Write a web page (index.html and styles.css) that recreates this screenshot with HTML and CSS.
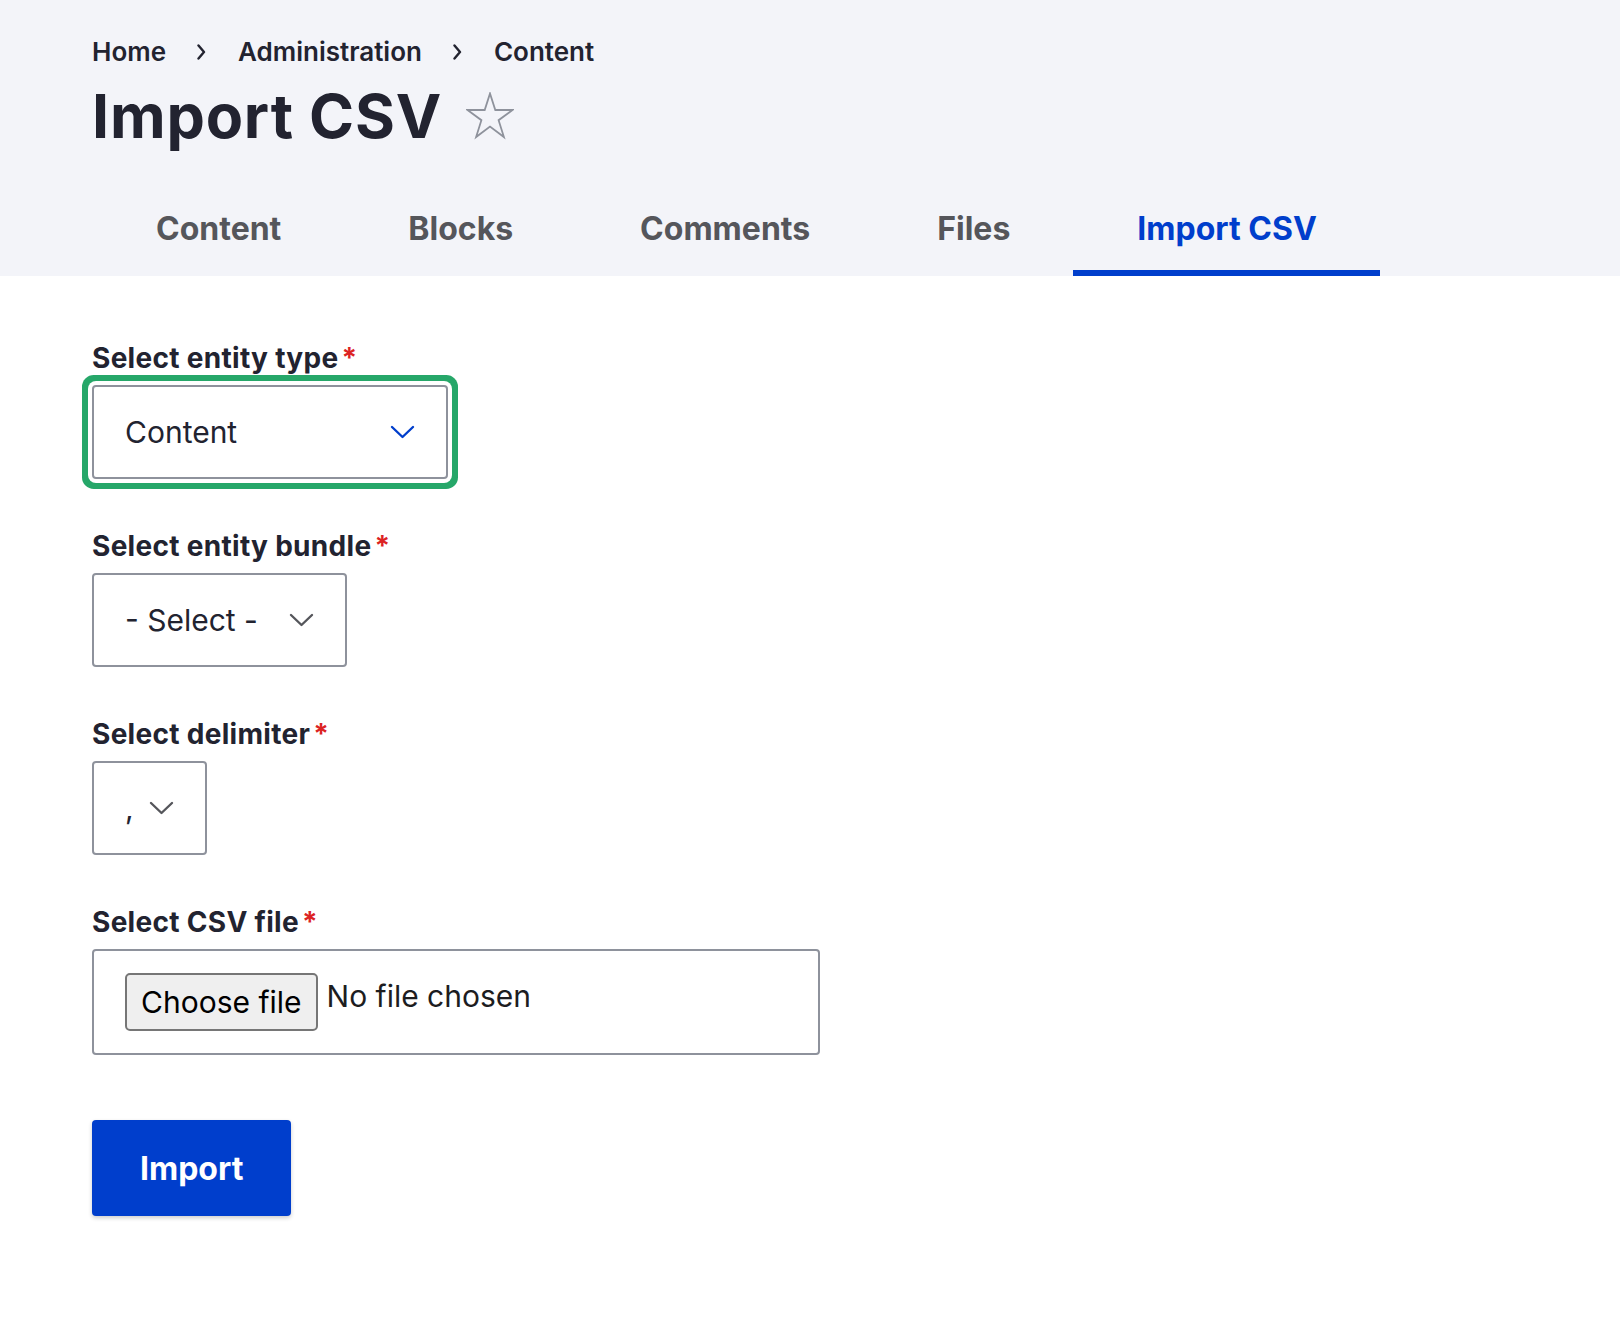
FILE: index.html
```html
<!DOCTYPE html>
<html lang="en">
<head>
    <meta charset="UTF-8">
    <meta name="viewport" content="width=device-width, initial-scale=1.0">
    <title>Import CSV</title>
    <link rel="stylesheet" href="styles.css">
</head>
<body>
    <header class="page-header">
        <nav class="breadcrumb" aria-label="Breadcrumb">
            <ol>
                <li><a href="#">Home</a></li>
                <li>
                    <svg class="breadcrumb-sep" width="10" height="16" viewBox="0 0 10 16"><path d="M2.5 1.5 L8 8 L2.5 14.5"/></svg>
                    <a href="#">Administration</a>
                </li>
                <li>
                    <svg class="breadcrumb-sep" width="10" height="16" viewBox="0 0 10 16"><path d="M2.5 1.5 L8 8 L2.5 14.5"/></svg>
                    <a href="#">Content</a>
                </li>
            </ol>
        </nav>
        <div class="title-row">
            <h1>Import CSV</h1>
            <button class="shortcut" type="button" aria-label="Add to shortcuts">
                <svg width="48" height="48" viewBox="0 0 48 48">
                    <polygon points="24,1.5 29.3,18 46.5,18 32.6,28.2 37.9,45 24,34.6 10.1,45 15.4,28.2 1.5,18 18.7,18"/>
                </svg>
            </button>
        </div>
        <nav class="tabs">
            <ul>
                <li><a href="#">Content</a></li>
                <li><a href="#">Blocks</a></li>
                <li><a href="#">Comments</a></li>
                <li><a href="#">Files</a></li>
                <li><a href="#" class="is-active">Import CSV</a></li>
            </ul>
        </nav>
    </header>

    <main class="page-content">
        <form class="import-form">
            <div class="form-item">
                <label for="entity-type">Select entity type<span class="required">*</span></label>
                <div class="select-wrap">
                    <select id="entity-type" class="form-select is-focused" style="width: 356px;">
                        <option>Content</option>
                    </select>
                    <svg class="select-arrow is-blue" width="25" height="14" viewBox="0 0 25 14"><path d="M2 2 L12.5 12 L23 2"/></svg>
                </div>
            </div>

            <div class="form-item">
                <label for="entity-bundle">Select entity bundle<span class="required">*</span></label>
                <div class="select-wrap">
                    <select id="entity-bundle" class="form-select" style="width: 255px;">
                        <option>- Select -</option>
                    </select>
                    <svg class="select-arrow" width="25" height="14" viewBox="0 0 25 14"><path d="M2 2 L12.5 12 L23 2"/></svg>
                </div>
            </div>

            <div class="form-item">
                <label for="delimiter">Select delimiter<span class="required">*</span></label>
                <div class="select-wrap">
                    <select id="delimiter" class="form-select" style="width: 115px;">
                        <option>,</option>
                    </select>
                    <svg class="select-arrow" width="25" height="14" viewBox="0 0 25 14"><path d="M2 2 L12.5 12 L23 2"/></svg>
                </div>
            </div>

            <div class="form-item">
                <label for="csv-file">Select CSV file<span class="required">*</span></label>
                <div class="file-widget">
                    <input type="file" id="csv-file" class="file-input">
                    <label for="csv-file" class="file-button">Choose file</label>
                    <span class="file-status">No file chosen</span>
                </div>
            </div>

            <div class="form-actions">
                <button type="submit" class="button-primary">Import</button>
            </div>
        </form>
    </main>
</body>
</html>
```

FILE: styles.css
```css
body {
    margin: 0;
    font-family: 'Inter', 'Noto Sans', sans-serif;
    color: #222330;
    background: #ffffff;
}

a {
    color: inherit;
    text-decoration: none;
}

/* header */

.page-header {
    background: #f3f4f9;
    padding: 36px 92px 0;
}

.breadcrumb ol {
    display: flex;
    align-items: center;
    margin: 0;
    padding: 0;
    list-style: none;
    font-size: 26px;
    line-height: 32px;
    font-weight: 600;
}

.breadcrumb li {
    display: flex;
    align-items: center;
}

.breadcrumb-sep {
    margin: 0 32px 0 30px;
}

.breadcrumb-sep path {
    fill: none;
    stroke: #222330;
    stroke-width: 2.4;
    stroke-linecap: round;
    stroke-linejoin: round;
}

.title-row {
    display: flex;
    align-items: center;
    margin-top: 12px;
}

.title-row h1 {
    margin: 0;
    font-size: 61px;
    line-height: 72px;
    font-weight: 700;
    letter-spacing: 0.8px;
}

.shortcut {
    margin-left: 24px;
    padding: 0;
    border: none;
    background: none;
    cursor: pointer;
    line-height: 0;
}

.shortcut polygon {
    fill: none;
    stroke: #8e929c;
    stroke-width: 1.8;
    stroke-linejoin: miter;
}

.tabs {
    margin-top: 29px;
}

.tabs ul {
    display: flex;
    margin: 0;
    padding: 0;
    list-style: none;
}

.tabs a {
    display: block;
    padding: 0 63px 0 64px;
    font-size: 32px;
    line-height: 95px;
    font-weight: 700;
    color: #55565b;
}

.tabs a.is-active {
    color: #003ecc;
    box-shadow: inset 0 -6px 0 #003ecc;
}

/* form */

.page-content {
    padding: 66px 92px 80px;
}

.form-item {
    margin-bottom: 51px;
}

.form-item > label {
    display: block;
    margin-bottom: 11px;
    font-size: 28px;
    line-height: 32px;
    font-weight: 700;
    letter-spacing: 0.3px;
}

.required {
    margin-left: 3px;
    color: #dc2323;
}

.select-wrap {
    position: relative;
    display: inline-block;
}

.form-select {
    display: block;
    box-sizing: border-box;
    height: 94px;
    padding: 0 60px 0 31px;
    border: 2px solid #8e929c;
    border-radius: 4px;
    background: #ffffff;
    font-family: 'Inter', 'Noto Sans', sans-serif;
    font-size: 30px;
    color: #222330;
    appearance: none;
    -webkit-appearance: none;
    outline: none;
}

.form-select.is-focused {
    box-shadow: 0 0 0 4px #ffffff, 0 0 0 10px #26a769;
}

.select-arrow {
    position: absolute;
    right: 33px;
    top: 50%;
    margin-top: -7px;
    pointer-events: none;
}

.select-arrow path {
    fill: none;
    stroke: #55565b;
    stroke-width: 2.4;
    stroke-linecap: round;
    stroke-linejoin: round;
}

.select-arrow.is-blue path {
    stroke: #003ecc;
}

.file-widget {
    display: flex;
    align-items: center;
    box-sizing: border-box;
    width: 728px;
    height: 106px;
    padding: 0 31px;
    border: 2px solid #8e929c;
    border-radius: 4px;
}

.file-input {
    display: none;
}

.file-button {
    box-sizing: border-box;
    height: 58px;
    padding: 0 14px;
    border: 2px solid #767676;
    border-radius: 5px;
    background: #efefef;
    font-size: 30px;
    line-height: 54px;
    color: #000000;
    cursor: pointer;
}

.file-status {
    margin: 0 0 12px 9px;
    font-size: 30px;
    color: #1d1d1f;
}

.form-actions {
    margin-top: 65px;
}

.button-primary {
    height: 96px;
    padding: 0 48px;
    border: none;
    border-radius: 4px;
    background: #003ecc;
    color: #ffffff;
    font-family: 'Inter', 'Noto Sans', sans-serif;
    font-size: 32px;
    font-weight: 700;
    box-shadow: 0 2px 4px rgba(0, 0, 0, 0.2);
    cursor: pointer;
}

.button-primary:hover {
    background: #0036b1;
}
```
